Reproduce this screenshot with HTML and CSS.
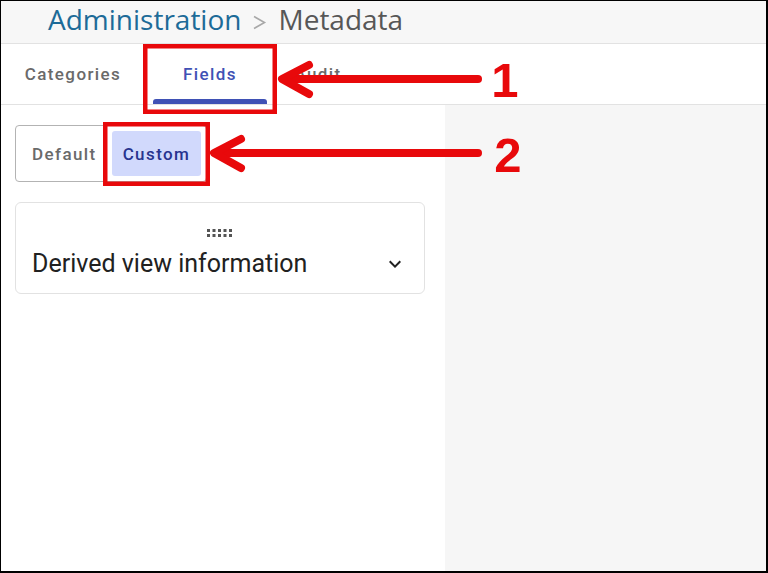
FILE: index.html
```html
<!DOCTYPE html>
<html lang="en">
<head>
<meta charset="utf-8">
<title>Administration - Metadata</title>
<link rel="stylesheet" href="styles.css">
</head>
<body>
<div class="frame">
  <header class="header">
    <span class="crumb-root">Administration</span>
    <svg class="crumb-sep" width="15" height="15" viewBox="0 0 15 15"><polyline points="2,1.5 12.5,7.5 2,13.5" fill="none" stroke="#a8a8a8" stroke-width="1.6"/></svg>
    <span class="crumb-current">Metadata</span>
  </header>
  <nav class="tabs">
    <div class="tab tab-categories"><span class="tab-label">Categories</span><span class="tab-indicator"></span></div>
    <div class="tab tab-fields active"><span class="tab-label">Fields</span><span class="tab-indicator"></span></div>
    <div class="tab tab-audit"><span class="tab-label">Audit</span><span class="tab-indicator"></span></div>
  </nav>
  <main class="content">
    <section class="left-panel">
      <div class="toggle">
        <button class="toggle-btn">Default</button>
        <button class="toggle-btn selected">Custom</button>
      </div>
      <div class="card">
        <div class="drag-row">
          <svg width="25" height="8" viewBox="0 0 25 8">
            <g fill="#555">
              <rect x="0" y="0" width="3" height="3"/><rect x="5.5" y="0" width="3" height="3"/><rect x="11" y="0" width="3" height="3"/><rect x="16.5" y="0" width="3" height="3"/><rect x="22" y="0" width="3" height="3"/>
              <rect x="0" y="5" width="3" height="3"/><rect x="5.5" y="5" width="3" height="3"/><rect x="11" y="5" width="3" height="3"/><rect x="16.5" y="5" width="3" height="3"/><rect x="22" y="5" width="3" height="3"/>
            </g>
          </svg>
        </div>
        <div class="card-row">
          <span class="card-title">Derived view information</span>
          <svg class="expand" width="24" height="24" viewBox="0 0 24 24"><path d="M16.59 8.59L12 13.17 7.41 8.59 6 10l6 6 6-6z" fill="#212121"/></svg>
        </div>
      </div>
    </section>
    <section class="right-panel"></section>
  </main>
  <svg class="annotations" width="768" height="573" viewBox="0 0 768 573">
    <g fill="none" stroke="#e8090b">
      <rect x="145.25" y="46.25" width="129.5" height="65.5" stroke-width="4.5"/>
      <rect x="105.25" y="124.25" width="102.5" height="59.5" stroke-width="4.5"/>
      <g stroke-width="8" stroke-linecap="round" stroke-linejoin="round">
        <line x1="284" y1="79" x2="478" y2="79"/>
        <polyline points="309,65 282,79 309,94"/>
        <line x1="216" y1="153" x2="478" y2="153"/>
        <polyline points="241,139 214,153 241,168"/>
      </g>
    </g>
    <g fill="#e8090b" font-family="'Liberation Sans', Arial, sans-serif" font-weight="700" font-size="49" text-anchor="middle">
      <text x="505" y="97">1</text>
      <text x="508" y="172">2</text>
    </g>
  </svg>
</div>
</body>
</html>
```
FILE: styles.css
```css
* { box-sizing: border-box; }
html, body { margin: 0; padding: 0; }
body { background: #fff; }

.frame {
  position: relative;
  width: 768px;
  height: 573px;
  border-style: solid;
  border-color: #000;
  border-width: 1px 2px 2px 1px;
  display: flex;
  flex-direction: column;
  overflow: hidden;
  font-family: Roboto, "Liberation Sans", sans-serif;
}

.header {
  height: 43px;
  flex: none;
  background: #f7f7f7;
  border-bottom: 1px solid #e2e2e2;
  padding-left: 47px;
  display: flex;
  align-items: flex-start;
  font-family: "Open Sans", "Noto Sans", sans-serif;
  font-size: 28px;
  line-height: 36px;
}
.crumb-root { color: #1d6b98; }
.crumb-sep { margin: 14px 11px 0 11px; flex: none; }
.crumb-current { color: #575757; }

.tabs {
  flex: none;
  height: 61px;
  display: flex;
  border-bottom: 1px solid #e2e2e2;
  background: #fff;
}
.tab {
  height: 60px;
  display: flex;
  flex-direction: column;
  font-size: 17px;
  font-weight: 500;
  letter-spacing: 1.4px;
  color: #6a6a6a;
}
.tab-label { flex: 1; display: flex; align-items: center; justify-content: center; padding-top: 5px; }
.tab-indicator { height: 5px; border-radius: 3px 3px 0 0; }
.tab-categories { width: 144px; }
.tab-fields { width: 114px; margin-left: 8px; }
.tab-audit { width: 102px; }
.tab.active { color: #3f51b5; }
.tab.active .tab-indicator { background: #3f51b5; }

.content { flex: 1; display: flex; }
.left-panel {
  width: 444px;
  flex: none;
  padding: 20px 20px 0 14px;
  background: #fff;
}
.right-panel { flex: 1; background: #f6f6f6; }

.toggle {
  display: inline-flex;
  gap: 4px;
  padding: 5px;
  border: 1px solid #b3b3b3;
  border-radius: 4px;
}
.toggle-btn {
  height: 45px;
  padding: 0 11px;
  border: none;
  border-radius: 3px;
  background: transparent;
  font-family: Roboto, "Liberation Sans", sans-serif;
  font-size: 17px;
  font-weight: 500;
  letter-spacing: 1.4px;
  color: #6a6a6a;
}
.toggle-btn.selected { background: #d1d9fc; color: #27348f; }

.card {
  margin-top: 20px;
  width: 410px;
  border: 1px solid #e2e2e2;
  border-radius: 6px;
  padding: 26px 17px 13px 16px;
}
.drag-row { height: 8px; display: flex; justify-content: center; }
.drag-row svg { display: block; }
.card-row {
  margin-top: 11px;
  height: 32px;
  display: flex;
  align-items: center;
  justify-content: space-between;
}
.card-title { font-size: 25px; line-height: 32px; color: #212121; }
.expand { display: block; }

.annotations {
  position: absolute;
  top: -1px;
  left: -1px;
  pointer-events: none;
}
```
